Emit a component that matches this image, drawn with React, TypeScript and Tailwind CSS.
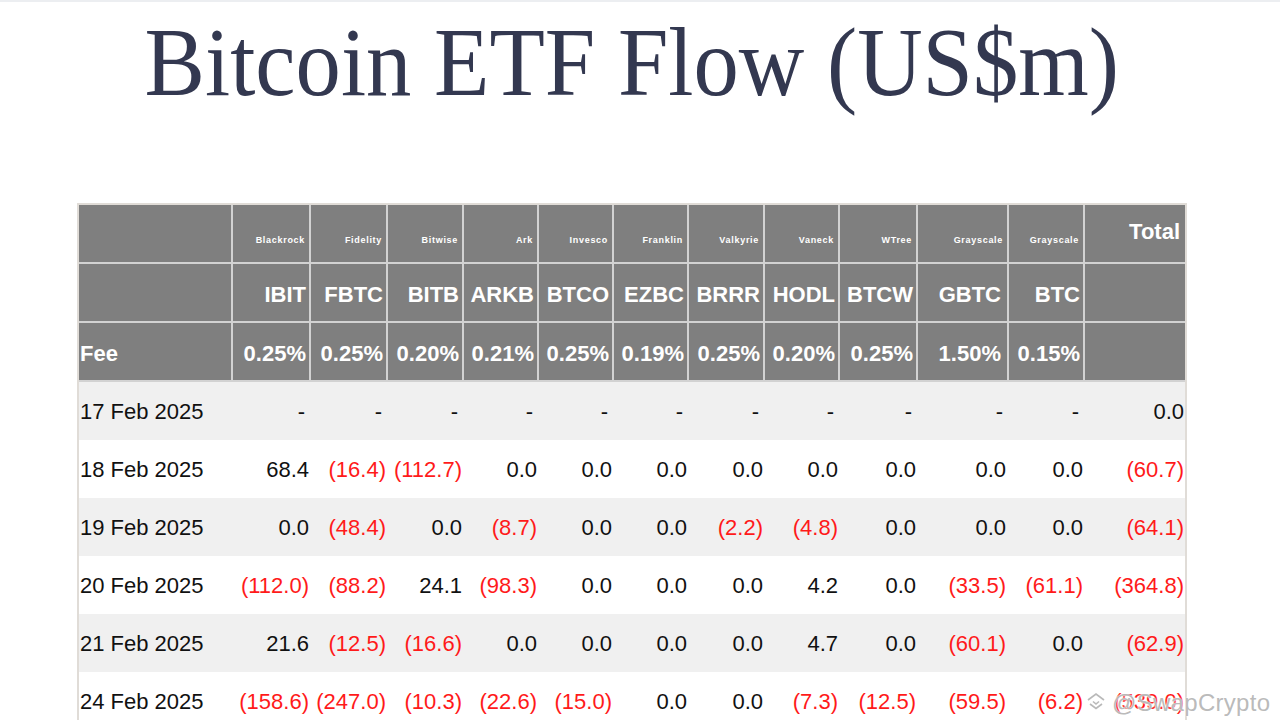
import React from "react";

const cols = "grid grid-cols-[152px_76px_75px_74px_73px_73px_73px_74px_73px_76px_89px_74px_100px] gap-x-[2px]";

const companies = ["Blackrock", "Fidelity", "Bitwise", "Ark", "Invesco", "Franklin", "Valkyrie", "Vaneck", "WTree", "Grayscale", "Grayscale"];
const tickers = ["IBIT", "FBTC", "BITB", "ARKB", "BTCO", "EZBC", "BRRR", "HODL", "BTCW", "GBTC", "BTC"];
const fees = ["0.25%", "0.25%", "0.20%", "0.21%", "0.25%", "0.19%", "0.25%", "0.20%", "0.25%", "1.50%", "0.15%"];

const rows: [string, string[]][] = [
  ["17 Feb 2025", ["-", "-", "-", "-", "-", "-", "-", "-", "-", "-", "-", "0.0"]],
  ["18 Feb 2025", ["68.4", "(16.4)", "(112.7)", "0.0", "0.0", "0.0", "0.0", "0.0", "0.0", "0.0", "0.0", "(60.7)"]],
  ["19 Feb 2025", ["0.0", "(48.4)", "0.0", "(8.7)", "0.0", "0.0", "(2.2)", "(4.8)", "0.0", "0.0", "0.0", "(64.1)"]],
  ["20 Feb 2025", ["(112.0)", "(88.2)", "24.1", "(98.3)", "0.0", "0.0", "0.0", "4.2", "0.0", "(33.5)", "(61.1)", "(364.8)"]],
  ["21 Feb 2025", ["21.6", "(12.5)", "(16.6)", "0.0", "0.0", "0.0", "0.0", "4.7", "0.0", "(60.1)", "0.0", "(62.9)"]],
  ["24 Feb 2025", ["(158.6)", "(247.0)", "(10.3)", "(22.6)", "(15.0)", "0.0", "0.0", "(7.3)", "(12.5)", "(59.5)", "(6.2)", "(539.0)"]],
];

export default function App() {
  return (
    <div className="relative w-[1280px] h-[720px] overflow-hidden bg-white border-t-2 border-[#eceef1]">
      <div className="ml-[77px] w-[1110px]">
        <div className="mt-[11px] h-[98px] flex justify-center">
          <h1
            className="inline-block text-[98px] leading-none font-normal text-[#333850] whitespace-nowrap scale-x-[0.925] origin-center"
            style={{ fontFamily: '"Liberation Serif", "Times New Roman", serif' }}
          >
            Bitcoin ETF Flow (US$m)
          </h1>
        </div>

        <div
          className="mt-[92px] border-2 border-[#e0dcd7] text-[22px]"
          style={{ fontFamily: '"Liberation Sans", Arial, sans-serif' }}
        >
          <div className="bg-[#d2d2d2] flex flex-col gap-y-[2px] pb-[2px] font-bold text-white">
            <div className={`${cols} h-[57px]`}>
              <div className="bg-[#7f7f7f]" />
              {companies.map((c, i) => (
                <div key={i} className="bg-[#7f7f7f] flex items-end justify-end pr-1 pb-[17px]">
                  <span className="text-[9px] leading-none tracking-[0.7px]">{c}</span>
                </div>
              ))}
              <div className="bg-[#7f7f7f] flex items-center justify-end pr-[5px] pb-[4px]">Total</div>
            </div>
            <div className={`${cols} h-[57px]`}>
              <div className="bg-[#7f7f7f]" />
              {tickers.map((t, i) => (
                <div key={i} className={`bg-[#7f7f7f] flex items-center justify-end pt-[3px] ${i === 9 ? "pr-[6px]" : "pr-[3px]"}`}>
                  {t}
                </div>
              ))}
              <div className="bg-[#7f7f7f]" />
            </div>
            <div className={`${cols} h-[57px]`}>
              <div className="bg-[#7f7f7f] flex items-center pl-[1px] pt-[3px]">Fee</div>
              {fees.map((f, i) => (
                <div key={i} className={`bg-[#7f7f7f] flex items-center justify-end pt-[3px] ${i === 9 ? "pr-[6px]" : "pr-[3px]"}`}>
                  {f}
                </div>
              ))}
              <div className="bg-[#7f7f7f]" />
            </div>
          </div>

          {rows.map(([date, vals], r) => (
            <div key={r} className={`${cols} h-[58px] items-center ${r % 2 === 0 ? "bg-[#f0f0f0]" : "bg-white"}`}>
              <div className="pl-[1px] text-[#111]">{date}</div>
              {vals.map((v, i) => (
                <div
                  key={i}
                  className={`text-right ${v.startsWith("(") ? "text-[#ff1a1a]" : "text-[#111]"} ${v === "-" ? "pr-[4px]" : i === 9 || i === 11 ? "pr-[1px]" : "pr-0"}`}
                >
                  {v}
                </div>
              ))}
            </div>
          ))}
        </div>
      </div>

      <div
        className="absolute left-[1084px] top-[683px] flex items-center gap-[4px] text-[24px] text-[#a8a8a8]/80"
        style={{ fontFamily: '"Liberation Sans", Arial, sans-serif', textShadow: "0 0 2px #fff, 0 0 1px #fff" }}
      >
        <svg width="24" height="22" viewBox="0 0 24 22" fill="none" stroke="#a8a8a8" strokeOpacity="0.8" strokeWidth="1.6">
          <path d="M4 8 L12 2 L20 8" />
          <path d="M6 12 L12 16.5 L18 12" />
          <path d="M9 9.5 L12 12 L15 9.5" />
        </svg>
        <span className="tracking-[0.3px]">@SwapCrypto</span>
      </div>
    </div>
  );
}
